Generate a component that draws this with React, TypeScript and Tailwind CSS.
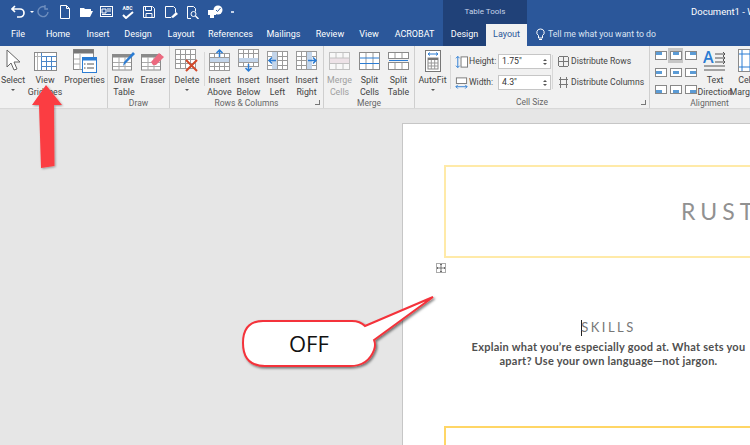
const font = "font-['Roboto','Open_Sans',sans-serif]";

function TableIcon({ w = 26, h = 18, stroke = "#9a9a9a" }: { w?: number; h?: number; stroke?: string }) {
  const cols = [0.25, 0.5, 0.75].map((f) => Math.round(f * (w - 1)) + 0.5);
  const rows = [0.25, 0.5, 0.75].map((f) => Math.round(f * (h - 1)) + 0.5);
  return (
    <>
      <rect x="0.5" y="0.5" width={w - 1} height={h - 1} fill="#fff" stroke={stroke} />
      {cols.map((x) => (
        <line key={x} x1={x} x2={x} y1="0.5" y2={h - 0.5} stroke={stroke} />
      ))}
      {rows.map((y) => (
        <line key={y} y1={y} y2={y} x1="0.5" x2={w - 0.5} stroke={stroke} />
      ))}
    </>
  );
}

function RibbonIcon({ name }: { name: string }) {
  if (name === "select")
    return (
      <svg width="16" height="24" viewBox="0 0 16 24">
        <path d="M2 1v17l4-4 3 7 3-1-3-7h6z" fill="#fff" stroke="#666" />
      </svg>
    );
  if (name === "gridlines")
    return (
      <svg width="23" height="19" viewBox="0 0 23 19">
        <rect x="0.5" y="0.5" width="22" height="18" fill="#fff" stroke="#8a8a8a" />
        <path d="M7.500 4.500h15M7.500 9.500h15M7.500 14.500h15M7.500 1v17M12.500 4v14M17.500 4v14" stroke="#4a86c8" fill="none" />
        <path d="M1 4.500h6.500M3.500 1v17" stroke="#b5b5b5" fill="none" />
      </svg>
    );
  if (name === "properties")
    return (
      <svg width="24" height="24" viewBox="0 0 24 24">
        <rect x="0.5" y="0.5" width="20" height="20" fill="#fff" stroke="#8a8a8a" />
        <rect x="0.5" y="0.5" width="20" height="4" fill="#777" />
        <path d="M7 5v16M1 10h6M1 15h6" stroke="#aaa" />
        <rect x="9.500" y="8.500" width="14" height="15" fill="#fff" stroke="#2b7cd3" />
        <rect x="9.500" y="8.500" width="14" height="3" fill="#2b7cd3" />
        <path d="M14 15h7M14 19h7M11 15h1.500M11 19h1.500" stroke="#555" />
      </svg>
    );
  if (name === "draw")
    return (
      <svg width="24" height="22" viewBox="0 0 24 22">
        <g transform="translate(0 4)">
          <rect x="0.5" y="0.5" width="19" height="15.500" fill="#fff" stroke="#8a8a8a" />
          <rect x="0.5" y="0.5" width="19" height="3" fill="#8a8a8a" />
          <path d="M7 3v13M13 3v13M1 8.500h18M1 12.500h18" stroke="#aaa" />
        </g>
        <path d="M11 16l1-4L21 2l2 2-10 10z" fill="#2b7cd3" />
      </svg>
    );
  if (name === "eraser")
    return (
      <svg width="24" height="22" viewBox="0 0 24 22">
        <g transform="translate(0 4)">
          <rect x="0.5" y="0.5" width="19" height="15.500" fill="#fff" stroke="#8a8a8a" />
          <rect x="0.5" y="0.5" width="19" height="3" fill="#8a8a8a" />
          <path d="M7 3v13M13 3v13M1 8.500h18M1 12.500h18" stroke="#aaa" />
        </g>
        <path d="M10 12l8-9 5 4-8 8h-3z" fill="#ec6a80" />
      </svg>
    );
  if (name === "delete")
    return (
      <svg width="24" height="24" viewBox="0 0 24 24">
        <TableIcon w={21} h={20} />
        <path d="M11 11l11 11M22 11L11 22" stroke="#d2492a" strokeWidth="2" />
      </svg>
    );
  if (name === "above")
    return (
      <svg width="22" height="24" viewBox="0 0 22 24">
        <g transform="translate(0 4)">
          <TableIcon w={21} h={18} />
          <rect x="1" y="5" width="19" height="4" fill="#c3d5ea" />
        </g>
        <path d="M10.500 8V1M7.500 4l3-3 3 3" stroke="#2b7cd3" strokeWidth="1.500" fill="none" />
      </svg>
    );
  if (name === "below")
    return (
      <svg width="22" height="24" viewBox="0 0 22 24">
        <TableIcon w={21} h={18} />
        <rect x="1" y="9" width="19" height="4" fill="#c3d5ea" />
        <path d="M10.500 15v7M7.500 19l3 3 3-3" stroke="#2b7cd3" strokeWidth="1.500" fill="none" />
      </svg>
    );
  if (name === "left" || name === "right")
    return (
      <svg width="22" height="20" viewBox="0 0 22 20">
        <TableIcon w={21} h={19} />
        <rect x={name === "left" ? 5 : 11} y="1" width="5" height="17" fill="#c3d5ea" />
        <path d={name === "left" ? "M9 9.500H2M5 6.500l-3 3 3 3" : "M12 9.500h8M17 6.500l3 3-3 3"} stroke="#2b7cd3" strokeWidth="1.500" fill="none" />
      </svg>
    );
  if (name === "merge")
    return (
      <svg width="21" height="18" viewBox="0 0 21 18" opacity="0.55">
        <rect x="0.5" y="0.5" width="20" height="17" fill="#fff" stroke="#9a9a9a" />
        <rect x="1" y="6" width="19" height="5.500" fill="#ead7e0" />
        <path d="M7 1v5M14 1v5M7 12v5M14 12v5M1 6h19M1 11.500h19" stroke="#9a9a9a" />
      </svg>
    );
  if (name === "splitcells")
    return (
      <svg width="21" height="18" viewBox="0 0 21 18">
        <rect x="0.5" y="0.5" width="20" height="17" fill="#fff" stroke="#8a8a8a" />
        <path d="M7 1v16M14 1v16" stroke="#999" />
        <path d="M1 6h19M1 11.500h19" stroke="#2b7cd3" />
      </svg>
    );
  if (name === "splittable")
    return (
      <svg width="21" height="18" viewBox="0 0 21 18">
        <rect x="0.5" y="0.5" width="20" height="6" fill="#fff" stroke="#8a8a8a" />
        <rect x="0.5" y="10.500" width="20" height="7" fill="#fff" stroke="#8a8a8a" />
        <path d="M1 8.500h19" stroke="#2b7cd3" />
        <path d="M7 1v5M14 1v5M7 11v6M14 11v6" stroke="#999" />
      </svg>
    );
  if (name === "autofit")
    return (
      <svg width="16" height="22" viewBox="0 0 16 22">
        <rect x="0.5" y="0.5" width="15" height="21" fill="#fff" stroke="#777" />
        <path d="M3 4h10M3 4l2-1.500M3 4l2 1.500M13 4l-2-1.500M13 4l-2 1.500" stroke="#2b7cd3" fill="none" />
        <rect x="3" y="8" width="10" height="11" fill="#fff" stroke="#888" />
        <rect x="3" y="8" width="10" height="2" fill="#777" />
        <path d="M6.300 10v9M9.700 10v9M3 13h10M3 16h10" stroke="#999" />
      </svg>
    );
  if (name === "textdir")
    return (
      <svg width="24" height="24" viewBox="0 0 24 24">
        <text x="0" y="14" fontSize="16" fill="#2b7cd3" fontFamily="Open Sans" fontWeight="600">A</text>
        <path d="M12 5h10M12 9h10M12 13h10M1 17h21M1 21h21M20 3l2 2-2 2M20 7l2 2-2 2M20 11l2 2-2 2" stroke="#555" fill="none" />
      </svg>
    );
  return (
    <svg width="16" height="24" viewBox="0 0 16 24">
      <rect x="0.5" y="0.5" width="15" height="22" fill="#fff" stroke="#8a8a8a" />
      <path d="M4 1v21M12 1v21M1 5h14M1 18h14" stroke="#2b7cd3" />
    </svg>
  );
}

function Caret() {
  return <span className="mt-[2px] h-0 w-0 border-x-[2px] border-t-[2px] border-x-transparent border-t-[#555]" />;
}

function RibbonBtn({ w, icon, lines, caret, muted }: { w: number; icon: string; lines: string[]; caret?: boolean; muted?: boolean }) {
  return (
    <div style={{ width: w }} className={`flex h-full shrink-0 flex-col items-center ${muted ? "text-[#a0a0a0]" : "text-[#444]"}`}>
      <div className="flex h-[26px] items-center justify-center">
        <RibbonIcon name={icon} />
      </div>
      <div className="whitespace-nowrap pt-[1px] text-center text-[8.800px] leading-[11.500px]">
        {lines.map((l) => (
          <div key={l}>{l}</div>
        ))}
      </div>
      {caret && <Caret />}
    </div>
  );
}

function Group({ w, label, launcher, children }: { w: number; label: string; launcher?: boolean; children: React.ReactNode }) {
  return (
    <div style={{ width: w }} className="relative flex shrink-0 flex-col border-r border-[#cfcfcf]">
      <div className="flex h-[52px] pt-[2px]">{children}</div>
      <div className="text-center text-[8.500px] leading-[11px] text-[#666]">{label}</div>
      {launcher && <span className="absolute bottom-[3px] right-[3px] h-[5px] w-[5px] border-b border-r border-[#777]" />}
    </div>
  );
}

function QatIcons() {
  return (
    <div className="flex items-center text-white">
      <svg width="18" height="14" viewBox="0 0 18 14" className="ml-[11px]">
        <path d="M4 1L1 4l3 3M1 4h8a4 4 0 0 1 0 8H6" stroke="#fff" strokeWidth="1.700" fill="none" />
      </svg>
      <span className="ml-[1px] h-0 w-0 border-x-[2px] border-t-[2px] border-x-transparent border-t-white" />
      <svg width="12" height="14" viewBox="0 0 12 14" className="ml-[3px]">
        <path d="M8 2a5 5 0 1 0 3 5M8 0v4h3" stroke="#6d8dbd" strokeWidth="1.400" fill="none" />
      </svg>
      <svg width="12" height="14" viewBox="0 0 12 14" className="ml-[10px]">
        <path d="M1.500.5h6l3 3v10h-9zM7.500.5v3h3" stroke="#fff" fill="none" />
      </svg>
      <svg width="14" height="12" viewBox="0 0 14 12" className="ml-[8px]">
        <path d="M1 2h4l1 1h6v2H4L1 11zM4 5h10l-3 6H1z" fill="#fff" />
      </svg>
      <svg width="13" height="12" viewBox="0 0 13 12" className="ml-[7px]">
        <rect x="0.5" y="0.5" width="12" height="10" fill="none" stroke="#fff" />
        <path d="M2 3h4v4H2zM7 3h4M7 5h4M2 8.500h9" stroke="#fff" fill="none" />
      </svg>
      <div className="ml-[8px] flex w-[13px] flex-col items-center">
        <span className="text-[5px] font-bold leading-[6px]">ABC</span>
        <svg width="12" height="8" viewBox="0 0 12 8">
          <path d="M1 4l3 3 7-6" stroke="#fff" strokeWidth="2" fill="none" />
        </svg>
      </div>
      <svg width="12" height="12" viewBox="0 0 12 12" className="ml-[9px]">
        <path d="M.5.5h9l2 2v9H.5z" fill="none" stroke="#fff" />
        <path d="M2.500 1v3.500h6V1M3 7.500h6v4H3z" stroke="#fff" fill="none" />
      </svg>
      <svg width="13" height="13" viewBox="0 0 13 13" className="ml-[10px]">
        <path d="M.5.5h8l2 2v4M6 11.500H.5V.500" fill="none" stroke="#fff" />
        <path d="M6 11l5-5 2 2-5 4z" fill="#fff" />
      </svg>
      <svg width="13" height="13" viewBox="0 0 13 13" className="ml-[8px]">
        <path d="M1.500.5h6l2 2v3M5 12.500H1.500V.500" fill="none" stroke="#fff" />
        <circle cx="7.500" cy="8" r="2.500" fill="none" stroke="#fff" />
        <path d="M9.500 10l3 3" stroke="#fff" strokeWidth="1.400" />
      </svg>
      <svg width="16" height="14" viewBox="0 0 16 14" className="ml-[8px]">
        <path d="M1 5h8v5H7v3H3v-3H1z" fill="#fff" />
        <circle cx="11" cy="5" r="4.500" fill="#fff" />
        <path d="M9 5l1.500 1.500L13.500 3" stroke="#2b579a" fill="none" />
      </svg>
      <span className="ml-[8px] h-[2px] w-[3px] bg-[#c5d3e8]" />
    </div>
  );
}

const tabs: [string, number][] = [
  ["File", 36],
  ["Home", 44],
  ["Insert", 36],
  ["Design", 44],
  ["Layout", 42],
  ["References", 57],
  ["Mailings", 49],
  ["Review", 44],
  ["View", 34],
  ["ACROBAT", 57],
];

function Spinner({ value }: { value: string }) {
  return (
    <div className="flex h-[15px] w-[53px] shrink-0 items-center justify-between border border-[#c6c6c6] bg-white px-[3px] text-[8.700px] text-[#333]">
      <span>{value}</span>
      <span className="flex flex-col gap-[2px]">
        <span className="h-0 w-0 border-x-[2px] border-b-[2px] border-x-transparent border-b-[#555]" />
        <span className="h-0 w-0 border-x-[2px] border-t-[2px] border-x-transparent border-t-[#555]" />
      </span>
    </div>
  );
}

function CellSize() {
  return (
    <div className="flex h-full pt-[6px] text-[8.600px] text-[#444]">
      <div className="mr-[4px] mt-[1px] h-[34px] w-px bg-[#d8d8d8]" />
      <div className="flex flex-col gap-[6px]">
        <div className="flex h-[15px] items-center">
          <svg width="13" height="14" viewBox="0 0 14 14" className="shrink-0">
            <rect x="6.500" y="1.500" width="7" height="11" fill="#fff" stroke="#777" />
            <path d="M3 1v12M1 3l2-2 2 2M1 11l2 2 2-2" stroke="#2b7cd3" fill="none" />
          </svg>
          <span className="w-[30px] shrink-0 pl-[1px]">Height:</span>
          <Spinner value={'1.75"'} />
        </div>
        <div className="flex h-[15px] items-center">
          <svg width="13" height="14" viewBox="0 0 14 14" className="shrink-0">
            <rect x="1.500" y="1.500" width="11" height="6" fill="#fff" stroke="#777" />
            <path d="M1 11h12M3 9l-2 2 2 2M11 9l2 2-2 2" stroke="#2b7cd3" fill="none" />
          </svg>
          <span className="w-[30px] shrink-0 pl-[1px]">Width:</span>
          <Spinner value={'4.3"'} />
        </div>
      </div>
      <div className="ml-[1px] mr-[5px] mt-[1px] h-[34px] w-px bg-[#d8d8d8]" />
      <div className="flex flex-col gap-[6px]">
        <div className="flex h-[15px] items-center whitespace-nowrap">
          <svg width="11" height="11" viewBox="0 0 11 11" className="mr-[2px]">
            <path d="M1 .5h9M1 10.500h9M1 5.500h9M.5 1v9M5.500 1v9M10.500 1v9" stroke="#777" fill="none" />
          </svg>
          Distribute Rows
        </div>
        <div className="flex h-[15px] items-center whitespace-nowrap">
          <svg width="11" height="11" viewBox="0 0 11 11" className="mr-[2px]">
            <path d="M1 2.500h9M1 7.500h9M2.500 0v11M8.500 0v11" stroke="#777" fill="none" />
          </svg>
          Distribute Columns
        </div>
      </div>
    </div>
  );
}

function Alignment() {
  const items = ["tl", "tc", "tr", "ml", "mc", "mr", "bl", "bc", "br"];
  return (
    <div className="grid h-fit shrink-0 grid-cols-3 gap-y-[2px] px-[3px]">
      {items.map((a) => (
        <div key={a} className={`flex h-[15px] w-[15px] items-center justify-center ${a === "tc" ? "bg-[#c6c6c6]" : ""}`}>
          <div className={`flex h-[9px] w-[12px] border border-[#888] bg-white ${a[0] === "t" ? "items-start" : a[0] === "m" ? "items-center" : "items-end"} ${a[1] === "l" ? "justify-start" : a[1] === "c" ? "justify-center" : "justify-end"}`}>
            <span className="h-[3px] w-[6px] bg-[#5b9bd5]" />
          </div>
        </div>
      ))}
    </div>
  );
}

export default function App() {
  return (
    <div className={`relative flex h-[445px] w-[750px] flex-col overflow-hidden bg-[#e6e6e6] ${font}`}>
      <div className="flex h-[46px] shrink-0 flex-col bg-[#2b579a] text-white">
        <div className="flex h-[24px] shrink-0">
          <div className="flex w-[443px] shrink-0 items-center">
            <QatIcons />
          </div>
          <div className="flex w-[84px] shrink-0 items-center justify-center bg-[#204178] text-[8px] text-[#c5d3e8]">Table Tools</div>
          <div className="ml-[164px] flex items-center whitespace-nowrap text-[9.500px]">Document1 - W</div>
        </div>
        <div className="flex h-[22px] shrink-0 items-center text-[9px]">
          {tabs.map(([t, w]) => (
            <div key={t} style={{ width: w }} className="shrink-0 text-center">{t}</div>
          ))}
          <div className="flex h-full w-[43px] shrink-0 items-center justify-center bg-[#204178]">Design</div>
          <div className="flex h-full w-[41px] shrink-0 items-center justify-center bg-[#f1f1f1] text-[#2b579a]">Layout</div>
          <div className="ml-[9px] flex items-center whitespace-nowrap text-[8.700px] text-[#dbe4f2]">
            <svg width="9" height="13" viewBox="0 0 9 13" className="mr-[3px]">
              <path d="M4.500 1a3.500 3.500 0 0 0-2 6.500V10h4V7.500a3.500 3.500 0 0 0-2-6.500zM3 11.500h3" stroke="#fff" fill="none" />
            </svg>
            Tell me what you want to do
          </div>
        </div>
      </div>

      <div className="flex h-[62px] shrink-0 bg-[#f1f1f1] shadow-[0_1px_1px_#d8d8d8]">
        <Group w={108} label="">
          <RibbonBtn w={26} icon="select" lines={["Select"]} caret />
          <RibbonBtn w={38} icon="gridlines" lines={["View", "Gridlines"]} />
          <RibbonBtn w={41} icon="properties" lines={["Properties"]} />
        </Group>
        <Group w={62} label="Draw">
          <RibbonBtn w={32} icon="draw" lines={["Draw", "Table"]} />
          <RibbonBtn w={26} icon="eraser" lines={["Eraser"]} />
        </Group>
        <Group w={154} label="Rows & Columns" launcher>
          <RibbonBtn w={34} icon="delete" lines={["Delete"]} caret />
          <div className="mt-[4px] h-[34px] w-px bg-[#d8d8d8]" />
          <RibbonBtn w={29} icon="above" lines={["Insert", "Above"]} />
          <RibbonBtn w={29} icon="below" lines={["Insert", "Below"]} />
          <RibbonBtn w={29} icon="left" lines={["Insert", "Left"]} />
          <RibbonBtn w={29} icon="right" lines={["Insert", "Right"]} />
        </Group>
        <Group w={91} label="Merge">
          <RibbonBtn w={31} icon="merge" lines={["Merge", "Cells"]} muted />
          <RibbonBtn w={29} icon="splitcells" lines={["Split", "Cells"]} />
          <RibbonBtn w={29} icon="splittable" lines={["Split", "Table"]} />
        </Group>
        <Group w={235} label="Cell Size" launcher>
          <RibbonBtn w={35} icon="autofit" lines={["AutoFit"]} caret />
          <CellSize />
        </Group>
        <Group w={120} label="Alignment">
          <Alignment />
          <RibbonBtn w={28} icon="textdir" lines={["Text", "Direction"]} />
          <RibbonBtn w={33} icon="margins" lines={["Cell", "Margins"]} />
        </Group>
      </div>

      <div className="flex min-h-0 flex-1 pt-[15px]">
        <div className="w-[402px] shrink-0" />
        <div className="relative flex-1 border-l border-t border-[#c6c6c6] bg-white pl-[41px] pt-[41px]">
          <div className="flex h-[93px] w-[340px] items-center border-2 border-r-0 border-[#ffeaa8] pl-[235px] text-[23px] tracking-[5px] text-[#919191] font-['Lato',sans-serif]">
            RUST
          </div>
          <div className="absolute left-[33px] top-[139px] flex h-[10px] w-[10px] items-center justify-center border border-[#aaa] bg-white">
            <svg width="8" height="8" viewBox="0 0 8 8">
              <path d="M4 0v8M0 4h8M3 1l1-1 1 1M3 7l1 1 1-1M1 3L0 4l1 1M7 3l1 1-1 1" stroke="#555" strokeWidth="0.800" fill="none" />
            </svg>
          </div>
          <div className="w-[329px] pt-[62px] text-center text-[#4f4f4f] font-['Lato',sans-serif]">
            <div className="flex h-[16px] items-center justify-center text-[13px] tracking-[2.500px] text-[#777]">
              <span className="mr-[-1px] h-[16px] w-px bg-[#222]" />
              SKILLS
            </div>
            <div className="mt-[4px] text-[11px] font-bold leading-[14px] tracking-[0.25px]">
              Explain what you’re especially good at. What sets you
              <br />
              apart? Use your own language—not jargon.
            </div>
          </div>
          <div className="mt-[58px] h-[30px] w-[340px] border-l-2 border-t-2 border-[#ffd666]" />
        </div>
      </div>

      <svg width="36" height="92" viewBox="30 82 36 92" className="absolute left-[30px] top-[82px]">
        <defs>
          <filter id="ar" x="-20%" y="-10%" width="140%" height="120%">
            <feDropShadow dx="1" dy="1" stdDeviation="0.800" floodColor="#000" floodOpacity="0.35" />
          </filter>
        </defs>
        <path d="M46 85L62 105H54L54.500 166L41 168L39 105H32Z" fill="#fb3d42" filter="url(#ar)" />
      </svg>
      <svg width="210" height="90" viewBox="230 290 210 90" className="absolute left-[230px] top-[290px]">
        <defs>
          <filter id="sh" x="-10%" y="-10%" width="130%" height="130%">
            <feDropShadow dx="1.500" dy="1.500" stdDeviation="1" floodColor="#000" floodOpacity="0.5" />
          </filter>
        </defs>
        <path
          d="M263 321H352Q360 321 365 326L433 297L374 340Q376 345 374 350Q368 366 350 366H265Q243 366 243 343Q243 321 263 321Z"
          fill="#fff"
          stroke="#f4333a"
          strokeWidth="2"
          filter="url(#sh)"
        />
      </svg>
      <div className="absolute left-[289px] top-[328px] text-[22px] leading-[30px] text-[#111] font-['Open_Sans',sans-serif]">OFF</div>
    </div>
  );
}
